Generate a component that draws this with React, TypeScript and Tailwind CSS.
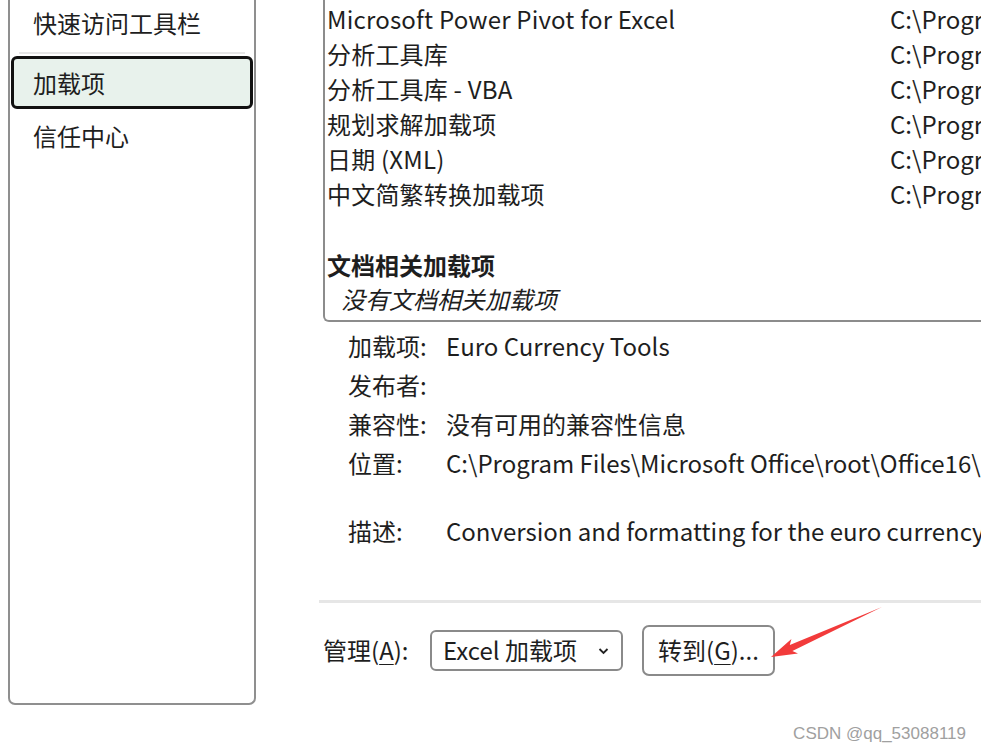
import React from 'react';

const addins = [
  'Microsoft Power Pivot for Excel',
  '分析工具库',
  '分析工具库 - VBA',
  '规划求解加载项',
  '日期 (XML)',
  '中文简繁转换加载项',
];

const details = [
  { label: '加载项:', value: 'Euro Currency Tools' },
  { label: '发布者:', value: '' },
  { label: '兼容性:', value: '没有可用的兼容性信息' },
  { label: '位置:', value: 'C:\\Program Files\\Microsoft Office\\root\\Office16\\Library\\EUROTOOL.XLAM' },
];

const Sidebar = () => {
  return (
    <aside className="ml-[8px] w-[248px] h-[705px] shrink-0 border-2 border-t-0 border-[#8f8f8f] rounded-b-[7px] px-[1px]">
      <div className="h-[45px] flex items-center pl-[22px]">快速访问工具栏</div>
      <div className="mx-[8px] mt-[7px] h-[2px] bg-[#e6e6e6]" />
      <div className="mt-[2px] h-[53px] flex items-center pl-[19px] border-[3px] border-[#111] rounded-[6px] bg-[#e8f2ec]">
        加载项
      </div>
      <div className="h-[54px] flex items-center pl-[22px]">信任中心</div>
    </aside>
  );
};

const AddinList = () => {
  return (
    <div className="h-[322px] border-2 border-t-0 border-r-0 border-[#8c8c8c] rounded-bl-[6px] pt-[1px] pl-[2px]">
      {addins.map((name) => (
        <div key={name} className="grid grid-cols-[563px_1fr] h-[35px] items-center whitespace-nowrap">
          <span className="tracking-[0.2px]">{name}</span>
          <span>C:\Program Files\Microsoft Office\root\Office16\Library</span>
        </div>
      ))}
      <div className="mt-[37px] h-[34px] flex items-center font-bold">文档相关加载项</div>
      <div className="h-[34px] flex items-center pl-[14px] italic">没有文档相关加载项</div>
    </div>
  );
};

const Details = () => {
  return (
    <div className="pt-[4px] pl-[25px]">
      {details.map((d) => (
        <div key={d.label} className="flex h-[39px] items-center whitespace-nowrap">
          <span className="w-[98px] shrink-0">{d.label}</span>
          <span>{d.value}</span>
        </div>
      ))}
      <div className="flex h-[39px] mt-[29px] items-center whitespace-nowrap">
        <span className="w-[98px] shrink-0">描述:</span>
        <span>Conversion and formatting for the euro currency</span>
      </div>
    </div>
  );
};

const ManageBar = () => {
  return (
    <div className="flex items-center h-[54px] mt-[20px]">
      <span className="w-[107px] shrink-0">
        管理(<u className="underline-offset-4 decoration-1">A</u>):
      </span>
      <div className="w-[193px] h-[41px] border-2 border-[#8a8a8a] rounded-[6px] flex items-center justify-between pl-[11px] pr-[12px]">
        <span>Excel 加载项</span>
        <svg width="11" height="8" viewBox="0 0 11 8" className="mt-[1px]">
          <polyline points="1.5,2 5.5,6 9.5,2" fill="none" stroke="#222" strokeWidth="1.8" />
        </svg>
      </div>
      <div className="ml-[19px] w-[133px] h-[51px] border-2 border-[#8a8a8a] rounded-[7px] flex items-center pl-[14px]">
        转到(<u className="underline-offset-4 decoration-1">G</u>)...
      </div>
    </div>
  );
};

const App = () => {
  return (
    <div className="relative w-[981px] h-[750px] overflow-hidden bg-white text-[#1e1e1e] text-[24px] leading-none font-['Noto_Sans_CJK_SC',sans-serif]">
      <div className="flex">
        <Sidebar />
        <main className="ml-[67px] w-[700px] shrink-0 flex flex-col">
          <AddinList />
          <Details />
          <div className="mt-[50px] -ml-[4px] h-[3px] bg-[#e6e6e6]" />
          <ManageBar />
        </main>
      </div>

      <svg className="absolute left-0 top-0 pointer-events-none" width="981" height="750" viewBox="0 0 981 750">
        <polygon
          points="882,607 792.4,651 798,653.6 771,657 791.4,639 789.8,645"
          fill="#f23b3b"
        />
      </svg>

      <div className="absolute right-[15px] bottom-[8px] text-[17px] text-[#a0a0a0] font-['Liberation_Sans',sans-serif]">
        CSDN @qq_53088119
      </div>
    </div>
  );
};

export default App;
